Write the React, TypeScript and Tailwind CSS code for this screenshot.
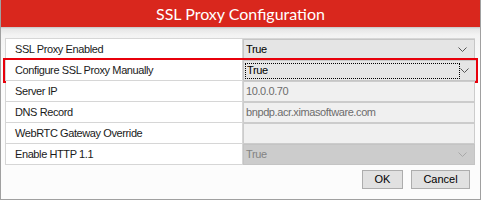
import React from 'react';

type Kind = 'select' | 'focus' | 'text' | 'disabled';

interface Row {
  label: string;
  kind: Kind;
  value: string;
  highlight?: boolean;
}

const rows: Row[] = [
  { label: 'SSL Proxy Enabled', kind: 'select', value: 'True' },
  { label: 'Configure SSL Proxy Manually', kind: 'focus', value: 'True', highlight: true },
  { label: 'Server IP', kind: 'text', value: '10.0.0.70' },
  { label: 'DNS Record', kind: 'text', value: 'bnpdp.acr.ximasoftware.com' },
  { label: 'WebRTC Gateway Override', kind: 'text', value: '' },
  { label: 'Enable HTTP 1.1', kind: 'disabled', value: 'True' },
];

function Chevron({ color }: { color: string }) {
  return (
    <svg width="9" height="5" viewBox="0 0 9 5" className="shrink-0">
      <polyline points="0.5,0.5 4.5,4.5 8.5,0.5" fill="none" stroke={color} strokeWidth="1" />
    </svg>
  );
}

function ValueCell({ row }: { row: Row }) {
  if (row.kind === 'text') {
    return (
      <div className="flex h-full items-center border border-[#cccccc] bg-[#f0f0f0] pl-[2px] text-[#6d6d6d]">
        {row.value}
      </div>
    );
  }
  if (row.kind === 'disabled') {
    return (
      <div className="flex h-full items-center justify-between border border-[#c4c4c4] bg-[#cccccc] pl-[2px] pr-[7px] text-[#838383]">
        <span>{row.value}</span>
        <Chevron color="#a8a8a8" />
      </div>
    );
  }
  return (
    <div className="flex h-full items-center justify-between border border-[#c6c6c6] bg-[#e5e5e5] pl-px pr-[7px] text-black">
      {row.kind === 'focus' ? (
        <span className="flex h-[16px] w-[215px] items-center border border-dotted border-black pl-px">{row.value}</span>
      ) : (
        <span className="pl-px">{row.value}</span>
      )}
      <Chevron color="#555555" />
    </div>
  );
}

export default function App() {
  return (
    <div className="flex h-[200px] w-[481px] flex-col border-x border-b border-[#a0a0a0] bg-white font-['Liberation_Sans',Arial,sans-serif] text-[11px] tracking-[-0.4px]">
      <div className="flex h-[27px] shrink-0 items-center justify-center bg-[#d9271d] font-['Lato','Open_Sans',sans-serif] text-[16px] tracking-normal text-white">
        SSL Proxy Configuration
      </div>
      <div className="flex flex-1 flex-col bg-[linear-gradient(to_bottom,#c4c4c4_0px,#e6e6e6_2px,#f3f3f3_8px,#fcfcfc_40px,#fcfcfc_100%)] pl-[4px] pr-[5px] pt-[11px]">
        <div className="border-l border-t border-[#d6d6d6]">
          {rows.map((row) => (
            <div key={row.label} className="relative flex h-[21px]">
              <div className="flex w-[237px] shrink-0 items-center border-b border-r border-[#d6d6d6] bg-white pl-[9px] text-[#1a1a1a]">
                {row.label}
              </div>
              <div className="flex-1">
                <ValueCell row={row} />
              </div>
              {row.highlight && (
                <span className="pointer-events-none absolute -bottom-[2px] -left-[3px] -right-[3px] -top-[2px] border-2 border-[#e8000b]" />
              )}
            </div>
          ))}
        </div>
        <div className="mt-[5px] flex justify-end gap-[8px] pr-[5px] tracking-normal">
          <button className="h-[19px] w-[41px] border border-[#adadad] bg-[#e1e1e1] text-[11px] text-black">OK</button>
          <button className="h-[19px] w-[59px] border border-[#adadad] bg-[#e1e1e1] text-[11px] text-black">Cancel</button>
        </div>
      </div>
    </div>
  );
}
